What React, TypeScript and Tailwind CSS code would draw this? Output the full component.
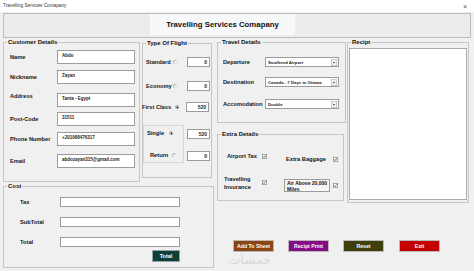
import React from "react";

type FrameProps = {
  label: string;
  className?: string;
  labelClass?: string;
  children?: React.ReactNode;
};

function Frame({ label, className = "", labelClass = "", children }: FrameProps) {
  return (
    <div className={`relative border border-[#c6c6c6] ${className}`}>
      <span
        className={`absolute -top-[4px] left-[3px] bg-[#f0f0f0] px-[1px] font-bold text-[6px] leading-[7px] text-[#111] whitespace-nowrap ${labelClass}`}
      >
        {label}
      </span>
      {children}
    </div>
  );
}

function TextBox({ value = "", className = "" }: { value?: string; className?: string }) {
  return (
    <div className={`bg-white border border-[#9c9c9c] pl-[4px] pt-[1.5px] font-bold text-[4.5px] leading-[5px] text-[#222] whitespace-nowrap overflow-hidden ${className}`}>
      {value}
    </div>
  );
}

function NumBox({ value }: { value: string }) {
  return (
    <div className="w-[23px] h-[10px] bg-white border border-[#9c9c9c] flex items-center justify-end pr-[2px] font-bold text-[5px] leading-[5px] text-[#222]">
      {value}
    </div>
  );
}

function Radio({ on = false }: { on?: boolean }) {
  return (
    <svg width="5" height="5" viewBox="0 0 5 5" className="shrink-0">
      <path d="M0.8 3.6 A2 2 0 0 1 3.6 0.8" fill="none" stroke="#8a8a8a" strokeWidth="0.7" />
      <path d="M3.6 0.8 A2 2 0 0 1 0.8 3.6" fill="none" stroke="#e0e0e0" strokeWidth="0.7" />
      {on && <circle cx="2.5" cy="2.5" r="1" fill="#111" />}
    </svg>
  );
}

function Check() {
  return (
    <svg width="5" height="5" viewBox="0 0 5 5" className="shrink-0">
      <rect x="0.35" y="0.35" width="4.3" height="4.3" fill="#fff" stroke="#8a8a8a" strokeWidth="0.7" />
      <path d="M1.1 2.5 L2 3.5 L3.9 1.3" fill="none" stroke="#222" strokeWidth="0.7" />
    </svg>
  );
}

function Combo({ value }: { value: string }) {
  return (
    <div className="w-[74px] h-[10px] bg-white border border-[#9c9c9c] flex items-center justify-between pl-[2px] pr-[1px]">
      <span className="font-bold text-[4.3px] leading-[5px] text-[#222] whitespace-nowrap">{value}</span>
      <svg width="6" height="7" viewBox="0 0 6 7" className="shrink-0">
        <rect x="0.3" y="0.3" width="5.4" height="6.4" fill="#f3f3f3" stroke="#b0b0b0" strokeWidth="0.6" />
        <path d="M2 3 L4 3 L3 4.4 Z" fill="#111" />
      </svg>
    </div>
  );
}

const lbl = "font-bold text-[5.7px] leading-[7px] text-[#151515] whitespace-nowrap";

function CustRow({ label, value, top = false, className = "" }: { label: string; value: string; top?: boolean; className?: string }) {
  return (
    <div className={`flex ${top ? "items-start" : "items-center"} h-[14px] pl-[6px] ${className}`}>
      <span className={`${lbl} w-[47px]`}>{label}</span>
      <TextBox value={value} className="w-[78px] h-[14px]" />
    </div>
  );
}

function ActionButton({ label, color }: { label: string; color: string }) {
  return (
    <div className={`w-[41px] h-[12px] ${color} border border-[#b8b8b8] flex items-center justify-center font-bold text-[5.2px] leading-[6px] text-white whitespace-nowrap`}>
      {label}
    </div>
  );
}

export default function App() {
  return (
    <div className="w-[474px] h-[271px] bg-[#f0f0f0] overflow-hidden flex flex-col font-['Liberation_Sans',Arial,sans-serif]">
      {/* title bar */}
      <div className="h-[12px] bg-white flex items-center justify-between pl-[3px] pr-[7px]">
        <span className="text-[4.7px] leading-[6px] text-[#333]">Travelling Services Comapany</span>
        <span className="text-[7px] leading-[7px] text-[#555]">×</span>
      </div>

      {/* header */}
      <div className="mx-[3px] mt-[1px] h-[25px] border border-[#bdbdbd] bg-[#ececec] flex">
        <div className="ml-[146px] w-[145px] h-[21px] bg-[#f7f8fa] flex items-center justify-center font-bold text-[7.8px] leading-[9px] text-[#111] whitespace-nowrap">
          Travelling Services Comapany
        </div>
      </div>

      {/* main */}
      <div className="mt-[4px] flex pl-[3px]">
        {/* left column */}
        <div className="w-[211px] flex flex-col">
          <div className="flex">
            <Frame label="Customer Details" className="w-[137px] h-[140px]">
              <div className="flex flex-col pt-[7px]">
                <CustRow label="Name" value="Abdo" />
                <CustRow label="Nickname" value="Zayan" className="mt-[6px]" />
                <CustRow label="Address" value="Tanta - Egypt" top className="mt-[9px]" />
                <CustRow label="Post-Code" value="31511" className="mt-[5px]" />
                <CustRow label="Phone Number" value="+201068476317" className="mt-[6px]" />
                <CustRow label="Email" value="abdozayan315@gmail.com" className="mt-[8px]" />
              </div>
            </Frame>

            <Frame label="Type Of Flight" className="ml-[2px] mt-[1px] w-[70px] h-[135px]" labelClass="left-[3px]">
              <div className="flex flex-col pt-[13px]">
                <div className="flex items-center h-[10px]">
                  <div className="w-[44px] flex items-center justify-between pl-[3px] pr-[9px]">
                    <span className={lbl}>Standard</span>
                    <Radio />
                  </div>
                  <NumBox value="0" />
                </div>
                <div className="flex items-center h-[10px] mt-[14px]">
                  <div className="w-[44px] flex items-center justify-between pl-[3px] pr-[9px]">
                    <span className={lbl}>Economy</span>
                    <Radio />
                  </div>
                  <NumBox value="0" />
                </div>
                <div className="flex items-center h-[10px] mt-[11px]">
                  <div className="w-[44px] -ml-[1px] flex items-center justify-between pr-[6px]">
                    <span className={lbl}>First Class</span>
                    <Radio on />
                  </div>
                  <NumBox value="520" />
                </div>
                <div className="flex mt-[13px]">
                  <div className="w-[41px] h-[38px] border border-[#d6d6d6] flex flex-col">
                    <div className="flex items-center justify-between h-[8px] mt-[3px] pl-[3px] pr-[9px]">
                      <span className={lbl}>Single</span>
                      <Radio on />
                    </div>
                    <div className="flex items-center justify-between h-[8px] mt-[14px] pl-[6px] pr-[6px]">
                      <span className={lbl}>Return</span>
                      <Radio />
                    </div>
                  </div>
                  <div className="ml-[3px] flex flex-col pt-[4px]">
                    <NumBox value="520" />
                    <div className="mt-[12px]">
                      <NumBox value="0" />
                    </div>
                  </div>
                </div>
              </div>
            </Frame>
          </div>

          <Frame label="Cost" className="mt-[4px] w-[211px] h-[82px]">
            <div className="flex flex-col pt-[10px]">
              <div className="flex items-center h-[10px]">
                <span className={`${lbl} w-[56px] pl-[16px]`}>Tax</span>
                <div className="w-[120px] h-[10px] bg-white border border-[#9c9c9c]" />
              </div>
              <div className="flex items-center h-[10px] mt-[10px]">
                <span className={`${lbl} w-[56px] pl-[16px]`}>SubTotal</span>
                <div className="w-[120px] h-[10px] bg-white border border-[#9c9c9c]" />
              </div>
              <div className="flex items-center h-[10px] mt-[10px]">
                <span className={`${lbl} w-[56px] pl-[16px]`}>Total</span>
                <div className="w-[120px] h-[10px] bg-white border border-[#9c9c9c]" />
              </div>
              <div className="mt-[3px] ml-[148px] w-[28px] h-[12px] bg-[#0e3f38] border border-[#9aa5a3] flex items-center justify-center font-bold text-[5.5px] leading-[6px] text-white">
                Total
              </div>
            </div>
          </Frame>
        </div>

        {/* middle + right */}
        <div className="ml-[3px] flex flex-col">
          <div className="flex">
            <div className="w-[129px] flex flex-col">
              <Frame label="Travel Details" className="h-[81px]">
                <div className="flex flex-col pt-[14px]">
                  <div className="flex items-center h-[10px]">
                    <span className={`${lbl} w-[47px] pl-[5px]`}>Departure</span>
                    <Combo value="Southend Airport" />
                  </div>
                  <div className="flex items-center h-[10px] mt-[10px]">
                    <span className={`${lbl} w-[47px] pl-[5px]`}>Destination</span>
                    <Combo value="Canada - 7 Days in Ottawa" />
                  </div>
                  <div className="flex items-center h-[10px] mt-[12px]">
                    <span className={`${lbl} w-[47px] pl-[5px]`}>Accomodation</span>
                    <Combo value="Double" />
                  </div>
                </div>
              </Frame>

              <Frame label="Extra Details" className="mt-[11px] w-[127px] h-[67px]" labelClass="text-[5px]">
                <div className="flex flex-col pt-[18px]">
                  <div className="flex h-[8px]">
                    <div className="w-[66px] flex items-center justify-between pl-[9px] pr-[17px] h-[6px]">
                      <span className={lbl}>Airport Tax</span>
                      <Check />
                    </div>
                    <div className="flex-1 flex items-center justify-between pl-[2px] pr-[5px] mt-[3px] h-[6px]">
                      <span className={lbl}>Extra Baggage</span>
                      <Check />
                    </div>
                  </div>
                  <div className="flex mt-[14px]">
                    <div className="w-[66px] flex items-start justify-between pl-[6px] pr-[17px]">
                      <span className="font-bold text-[5.7px] leading-[8px] text-[#151515]">
                        Travelling
                        <br />
                        Insurance
                      </span>
                      <div className="mt-[5px]">
                        <Check />
                      </div>
                    </div>
                    <div className="flex-1 flex items-start justify-between pr-[5px]">
                      <div className="mt-[4px] w-[46px] h-[13px] bg-[#f7f7f7] border border-[#9c9c9c] pl-[2px] pt-[1px] font-bold text-[5px] leading-[5.5px] text-[#151515]">
                        Air Above 20,000
                        <br />
                        Miles
                      </div>
                      <div className="mt-[8px]">
                        <Check />
                      </div>
                    </div>
                  </div>
                </div>
              </Frame>
            </div>

            <Frame label="Recipt" className="ml-[1px] w-[122px] h-[161px]">
              <div className="ml-[1px] mt-[5px] w-[118px] h-[152px] bg-white border border-[#aaaaaa]" />
            </Frame>
          </div>

          <div className="mt-[37px] pl-[16px] flex">
            <ActionButton label="Add To Sheet" color="bg-[#8b4513]" />
            <div className="ml-[14px]">
              <ActionButton label="Recipt Print" color="bg-[#850a85]" />
            </div>
            <div className="ml-[14px]">
              <ActionButton label="Reset" color="bg-[#3f3f0c]" />
            </div>
            <div className="ml-[15px]">
              <ActionButton label="Exit" color="bg-[#c40000]" />
            </div>
          </div>
          <div className="ml-[11px] mt-[1px] font-['DejaVu_Sans',sans-serif] text-[13px] leading-[14px] text-[#d9d9d9]">
            خمسات
          </div>
        </div>
      </div>
    </div>
  );
}
